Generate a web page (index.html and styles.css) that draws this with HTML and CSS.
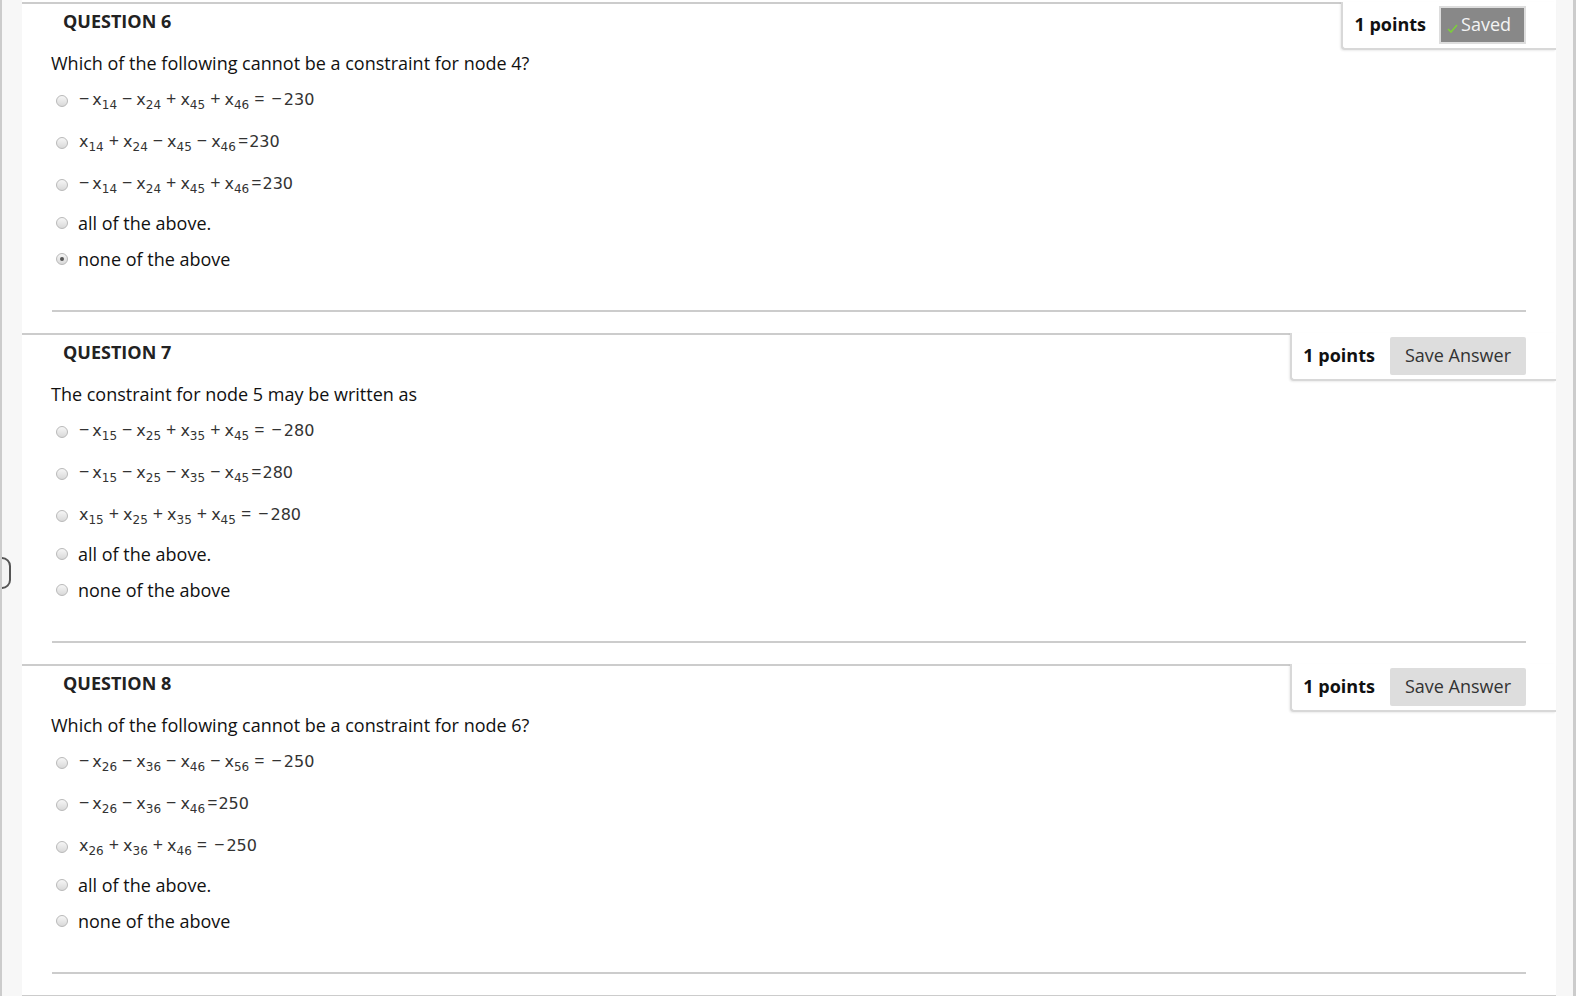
FILE: index.html
```html
<!DOCTYPE html>
<html lang="en">
<head>
<meta charset="utf-8">
<title>Quiz</title>
<link rel="stylesheet" href="styles.css">
</head>
<body>
<div class="page">
  <div class="handle"></div>
  <div class="content">

    <section class="question">
      <div class="qhead">
        <h2 class="qtitle">QUESTION 6</h2>
        <div class="points">
          <span class="pts">1 points</span>
          <button class="btn saved"><svg class="check" width="11" height="9" viewBox="0 0 11 9"><path d="M1 5 L4 8 L10 1" fill="none" stroke="#7ccf3a" stroke-width="1.6"/></svg>Saved</button>
        </div>
      </div>
      <div class="qbody">
        <p class="qtext">Which of the following cannot be a constraint for node 4?</p>
        <ul class="opts">
          <li class="opt math"><span class="radio"></span><span class="expr"><span class="un">−</span>x<sub>14</sub><span class="op">−</span>x<sub>24</sub><span class="op">+</span>x<sub>45</sub><span class="op">+</span>x<sub>46</sub><span class="eq">=</span><span class="neg">−</span>230</span></li>
          <li class="opt math"><span class="radio"></span><span class="expr">x<sub>14</sub><span class="op">+</span>x<sub>24</sub><span class="op">−</span>x<sub>45</sub><span class="op">−</span>x<sub>46</sub><span class="eqt">=</span>230</span></li>
          <li class="opt math"><span class="radio"></span><span class="expr"><span class="un">−</span>x<sub>14</sub><span class="op">−</span>x<sub>24</sub><span class="op">+</span>x<sub>45</sub><span class="op">+</span>x<sub>46</sub><span class="eqt">=</span>230</span></li>
          <li class="opt text"><span class="radio"></span><span>all of the above.</span></li>
          <li class="opt text"><span class="radio on"></span><span>none of the above</span></li>
        </ul>
      </div>
      <hr class="sep">
    </section>

    <section class="question">
      <div class="qhead">
        <h2 class="qtitle">QUESTION 7</h2>
        <div class="points">
          <span class="pts">1 points</span>
          <button class="btn">Save Answer</button>
        </div>
      </div>
      <div class="qbody">
        <p class="qtext">The constraint for node 5 may be written as</p>
        <ul class="opts">
          <li class="opt math"><span class="radio"></span><span class="expr"><span class="un">−</span>x<sub>15</sub><span class="op">−</span>x<sub>25</sub><span class="op">+</span>x<sub>35</sub><span class="op">+</span>x<sub>45</sub><span class="eq">=</span><span class="neg">−</span>280</span></li>
          <li class="opt math"><span class="radio"></span><span class="expr"><span class="un">−</span>x<sub>15</sub><span class="op">−</span>x<sub>25</sub><span class="op">−</span>x<sub>35</sub><span class="op">−</span>x<sub>45</sub><span class="eqt">=</span>280</span></li>
          <li class="opt math"><span class="radio"></span><span class="expr">x<sub>15</sub><span class="op">+</span>x<sub>25</sub><span class="op">+</span>x<sub>35</sub><span class="op">+</span>x<sub>45</sub><span class="eq">=</span><span class="neg">−</span>280</span></li>
          <li class="opt text"><span class="radio"></span><span>all of the above.</span></li>
          <li class="opt text"><span class="radio"></span><span>none of the above</span></li>
        </ul>
      </div>
      <hr class="sep">
    </section>

    <section class="question">
      <div class="qhead">
        <h2 class="qtitle">QUESTION 8</h2>
        <div class="points">
          <span class="pts">1 points</span>
          <button class="btn">Save Answer</button>
        </div>
      </div>
      <div class="qbody">
        <p class="qtext">Which of the following cannot be a constraint for node 6?</p>
        <ul class="opts">
          <li class="opt math"><span class="radio"></span><span class="expr"><span class="un">−</span>x<sub>26</sub><span class="op">−</span>x<sub>36</sub><span class="op">−</span>x<sub>46</sub><span class="op">−</span>x<sub>56</sub><span class="eq">=</span><span class="neg">−</span>250</span></li>
          <li class="opt math"><span class="radio"></span><span class="expr"><span class="un">−</span>x<sub>26</sub><span class="op">−</span>x<sub>36</sub><span class="op">−</span>x<sub>46</sub><span class="eqt">=</span>250</span></li>
          <li class="opt math"><span class="radio"></span><span class="expr">x<sub>26</sub><span class="op">+</span>x<sub>36</sub><span class="op">+</span>x<sub>46</sub><span class="eq">=</span><span class="neg">−</span>250</span></li>
          <li class="opt text"><span class="radio"></span><span>all of the above.</span></li>
          <li class="opt text"><span class="radio"></span><span>none of the above</span></li>
        </ul>
      </div>
      <hr class="sep">
    </section>

    <div class="nextq"></div>
  </div>
</div>
</body>
</html>
```
FILE: styles.css
```css
html, body {
  margin: 0;
  padding: 0;
  background: #f7f7f7;
}

.page {
  position: relative;
  box-sizing: border-box;
  width: 1576px;
  height: 996px;
  overflow: hidden;
  display: flex;
  border-left: 2px solid #cccccc;
  border-right: 3px solid #cccccc;
  padding: 0 17px 0 20px;
  background: #f7f7f7;
  font-family: "Open Sans", "Liberation Sans", sans-serif;
  color: #111;
}

.handle {
  position: absolute;
  left: -12px;
  top: 557px;
  width: 17px;
  height: 28px;
  border: 2px solid #555;
  border-radius: 9px;
  background: #f4f4f4;
}

.content {
  flex: 1;
  background: #fff;
  padding-top: 2px;
}

.qhead {
  display: flex;
  align-items: flex-start;
}

.qtitle {
  flex: 1;
  margin: 0;
  border-top: 2px solid #cccccc;
  padding: 5px 0 0 41px;
  font-size: 18px;
  line-height: 24px;
  font-weight: 700;
  color: #222;
}

.points {
  display: flex;
  align-items: center;
  padding: 4px 30px 4px 11px;
  border-left: 2px solid #d8d8d8;
  border-bottom: 2px solid #d8d8d8;
  border-bottom-left-radius: 4px;
  box-shadow: -1px 1px 2px rgba(0, 0, 0, 0.08);
  background: #fff;
}

.pts {
  font-weight: 700;
  font-size: 18px;
  line-height: 22px;
  margin: -2px 15px 0 0;
  color: #111;
}

.btn {
  height: 38px;
  border: none;
  border-radius: 2px;
  padding: 0 15px 2px;
  background: #dddddd;
  color: #333;
  font-family: "Open Sans", "Liberation Sans", sans-serif;
  font-size: 18px;
  line-height: 24px;
}

.btn.saved {
  display: flex;
  align-items: center;
  padding: 0 13px 2px 6px;
  margin-left: -2px;
  border: 2px solid #dddddd;
  border-radius: 0;
  background: #888888;
  color: #f4f4f4;
}

.check {
  margin: 8px 3px 0 0;
}

.qbody {
  padding-left: 29px;
}

.qtext {
  margin: 0;
  font-size: 18px;
  line-height: 27px;
  color: #111;
}

.opts {
  list-style: none;
  margin: 0;
  padding: 0 0 0 5px;
}

.opt {
  display: flex;
  align-items: center;
}

.opt.math {
  height: 42px;
}

.opt.text {
  height: 36px;
  font-size: 18px;
  line-height: 24px;
  color: #111;
}

.opt.math + .opt.text {
  margin-top: 2px;
}

.radio {
  box-sizing: border-box;
  width: 12px;
  height: 12px;
  flex: none;
  margin-right: 10px;
  border-radius: 50%;
  border: 1px solid #b9b9b9;
  background: linear-gradient(#f6f6f6, #d9d9d9);
  display: flex;
  align-items: center;
  justify-content: center;
}

.opt.math .radio {
  margin-top: 6px;
  margin-right: 11px;
}

.radio.on::after {
  content: "";
  width: 4px;
  height: 4px;
  border-radius: 50%;
  background: #555;
}

.expr {
  font-family: "DejaVu Sans", "Liberation Sans", sans-serif;
  font-size: 16px;
  line-height: 20px;
  color: #333;
  margin-top: 2px;
}

.expr sub {
  font-size: 12px;
  line-height: 0;
  vertical-align: -4px;
}

.un, .op, .eq, .eqt, .neg {
  font-family: "Open Sans", "Liberation Sans", sans-serif;
  font-size: 18px;
}

.un { margin-right: 3px; }
.op { margin: 0 4px 0 5px; }
.eq { margin: 0 7px 0 5px; }
.eqt { margin: 0 1px 0 2px; }
.neg { margin-right: 2px; }

.sep {
  border: 0;
  height: 2px;
  background: #cccccc;
  margin: 33px 30px 21px 30px;
}

.nextq {
  border-top: 2px solid #cccccc;
}
```
